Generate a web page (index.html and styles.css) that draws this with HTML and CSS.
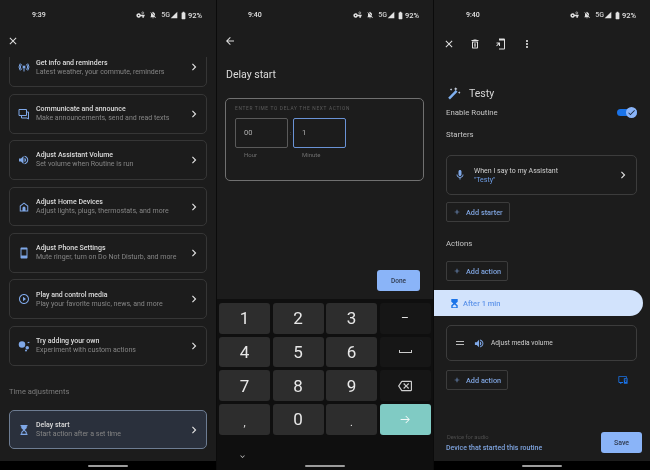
FILE: index.html
```html
<!DOCTYPE html>
<html lang="en">
<head>
<meta charset="utf-8">
<title>Routine</title>
<link rel="stylesheet" href="styles.css">
</head>
<body>
<svg class="defs" width="0" height="0" aria-hidden="true">
  <symbol id="i-close" viewBox="0 0 24 24"><path d="M19 6.41L17.59 5 12 10.59 6.41 5 5 6.41 10.59 12 5 17.59 6.41 19 12 13.41 17.59 19 19 17.59 13.41 12z"/></symbol>
  <symbol id="i-chev" viewBox="0 0 24 24"><path d="M10 6L8.59 7.41 13.17 12l-4.58 4.59L10 18l6-6z"/></symbol>
  <symbol id="i-back" viewBox="0 0 24 24"><path d="M20 11H7.83l5.59-5.59L12 4l-8 8 8 8 1.41-1.41L7.83 13H20v-2z"/></symbol>
  <symbol id="i-key" viewBox="0 0 24 24"><path d="M12.65 10C11.83 7.67 9.61 6 7 6c-3.31 0-6 2.69-6 6s2.69 6 6 6c2.61 0 4.83-1.67 5.65-4H17v4h4v-4h2v-4H12.65zM7 14c-1.1 0-2-.9-2-2s.9-2 2-2 2 .9 2 2-.9 2-2 2z"/><circle cx="18" cy="5" r="2.6" fill="none" stroke="currentColor" stroke-width="1.6"/></symbol>
  <symbol id="i-bell" viewBox="0 0 24 24"><path d="M20 18.69L7.84 6.14 5.27 3.49 4 4.76l2.8 2.8v.01c-.52.99-.8 2.16-.8 3.42v5l-2 2v1h13.73l2 2L21 19.72l-1-1.03zM12 22c1.11 0 2-.89 2-2h-4c0 1.11.89 2 2 2zm6-7.32V11c0-3.08-1.64-5.64-4.5-6.32V4c0-.83-.67-1.5-1.5-1.5s-1.5.67-1.5 1.5v.68c-.15.03-.29.08-.42.12-.1.03-.2.07-.3.11h-.01c-.2.08-.4.17-.59.27-.01.01-.02.01-.03.02L18 14.68z"/></symbol>
  <symbol id="i-signal" viewBox="0 0 24 24"><path d="M22 2v20H2z"/></symbol>
  <symbol id="i-batt" viewBox="0 0 24 24"><path d="M15.67 4H14V2h-4v2H8.33C7.6 4 7 4.6 7 5.33v15.33C7 21.4 7.6 22 8.33 22h7.33c.74 0 1.34-.6 1.34-1.33V5.33C17 4.6 16.4 4 15.67 4z"/></symbol>
  <symbol id="i-broadcast" viewBox="0 0 24 24"><circle cx="12" cy="12" r="3"/><path d="M12 15v6M8 8.5L6.5 7a8 8 0 0 0 0 10L8 15.5M16 8.5L17.500 7a8 8 0 0 1 0 10L16 15.5M4.500 5a12 12 0 0 0 0 14M19.500 5a12 12 0 0 1 0 14" fill="none" stroke="currentColor" stroke-width="2"/></symbol>
  <symbol id="i-chat" viewBox="0 0 24 24"><path d="M2 3h15v12H2zM7 15v5h11l3 2V8h-4" fill="none" stroke="currentColor" stroke-width="2"/></symbol>
  <symbol id="i-vol" viewBox="0 0 24 24"><path d="M2 9v6h4l5 5V4L6 9H2zm11-1.500c2 .8 3 2.500 3 4.500s-1 3.700-3 4.500zM13 3.500c4.500 1 7.500 4.300 7.500 8.500s-3 7.500-7.500 8.500v-2c3.200-.9 5.500-3.500 5.500-6.500s-2.300-5.600-5.500-6.500z"/></symbol>
  <symbol id="i-home" viewBox="0 0 24 24"><path d="M12 3L3.500 9.500V21h17V9.500zM5.500 19v-8.500L12 5.500l6.500 5V19H15v-5a3 3 0 0 0-6 0v5z"/></symbol>
  <symbol id="i-phone" viewBox="0 0 24 24"><path d="M17 1H7c-1.100 0-2 .9-2 2v18c0 1.100.9 2 2 2h10c1.100 0 2-.9 2-2V3c0-1.100-.9-2-2-2zm0 16H7V5h10z"/></symbol>
  <symbol id="i-play" viewBox="0 0 24 24"><path d="M10 16.500l6-4.500-6-4.500v9zM12 2C6.480 2 2 6.480 2 12s4.480 10 10 10 10-4.480 10-10S17.520 2 12 2zm0 18c-4.410 0-8-3.590-8-8s3.590-8 8-8 8 3.590 8 8-3.590 8-8 8z"/></symbol>
  <symbol id="i-assist" viewBox="0 0 24 24"><circle cx="8" cy="9" r="6.500"/><circle cx="18.500" cy="15.500" r="3.500"/><circle cx="16" cy="21" r="2"/><path d="M19 4.500l3.500-1 .5 2-3.500 1z"/></symbol>
  <symbol id="i-hour" viewBox="0 0 24 24"><path d="M5 2h14v2.500h-1.500V8L13.500 12l4 4v3.500H19V22H5v-2.500h1.500V16l4-4-4-4V4.500H5zM8.500 17v2.500h7V17L12 13.500z"/></symbol>
  <symbol id="i-hourfull" viewBox="0 0 24 24"><path d="M5 2h14v6l-4.500 4 4.500 4v6H5v-6l4.500-4L5 8zM8 17.500V20h8v-2.500L12 14z"/></symbol>
  <symbol id="i-trash" viewBox="0 0 24 24"><path d="M6 19c0 1.100.9 2 2 2h8c1.100 0 2-.9 2-2V7H6v12zM8 9h8v10H8V9zm7.500-5l-1-1h-5l-1 1H5v2h14V4zM10 10.500h1.300v7H10zM12.700 10.500H14v7h-1.300z"/></symbol>
  <symbol id="i-export" viewBox="0 0 24 24"><path d="M8 1h10a2 2 0 0 1 2 2v18a2 2 0 0 1-2 2H8v-2h10V5H8zM3 9h7v7H8V12.400L3.700 16.700 2.300 15.300 6.600 11H3z"/></symbol>
  <symbol id="i-more" viewBox="0 0 24 24"><path d="M12 8c1.100 0 2-.9 2-2s-.9-2-2-2-2 .9-2 2 .9 2 2 2zm0 2c-1.100 0-2 .9-2 2s.9 2 2 2 2-.9 2-2-.9-2-2-2zm0 6c-1.100 0-2 .9-2 2s.9 2 2 2 2-.9 2-2-.9-2-2-2z"/></symbol>
  <symbol id="i-wand" viewBox="0 0 24 24"><path d="M2 20l13-13 3 3L5 23z"/><path d="M15 2l1 2 2 1-2 1-1 2-1-2-2-1 2-1zM21 9l.8 1.500 1.500.8-1.500.8-.8 1.500-.8-1.500-1.500-.8 1.500-.8zM7 4l.7 1.300L9 6l-1.300.7L7 8l-.7-1.300L5 6l1.300-.7z" fill="#cfd8e6"/></symbol>
  <symbol id="i-mic" viewBox="0 0 24 24"><path d="M12 14c1.660 0 3-1.340 3-3V5c0-1.660-1.340-3-3-3S9 3.340 9 5v6c0 1.660 1.340 3 3 3zm5.300-3c0 3-2.540 5.100-5.300 5.100S6.700 14 6.700 11H5c0 3.410 2.720 6.230 6 6.720V21h2v-3.280c3.280-.48 6-3.300 6-6.720h-1.700z"/></symbol>
  <symbol id="i-plus" viewBox="0 0 24 24"><path d="M19 13h-6v6h-2v-6H5v-2h6V5h2v6h6v2z"/></symbol>
  <symbol id="i-check" viewBox="0 0 24 24"><path d="M9 16.170L4.830 12l-1.420 1.410L9 19 21 7l-1.410-1.410z"/></symbol>
  <symbol id="i-cast" viewBox="0 0 24 24"><path d="M1 3h20v4h-2V5H3v12h9v2H8v2H5v-2H3a2 2 0 0 1-2-2zM14 8h9v13h-9zM16 10v3h5v-3zM17 15.500a1.500 1.500 0 1 0 3 0 1.500 1.500 0 1 0-3 0"/></symbol>
  <symbol id="i-bksp" viewBox="0 0 24 24"><path d="M22 3H7c-.69 0-1.230.35-1.590.88L0 12l5.410 8.110c.36.530.9.890 1.590.890h15c1.100 0 2-.9 2-2V5c0-1.100-.9-2-2-2zm0 16H7.070L2.400 12l4.660-7H22v14zm-11.590-2L14 13.410 17.590 17 19 15.590 15.410 12 19 8.410 17.590 7 14 10.590 10.410 7 9 8.410 12.590 12 9 15.590z"/></symbol>
  <symbol id="i-next" viewBox="0 0 24 24"><path d="M13 5l7 7-7 7-1.200-1.200 5-5H3v-1.600h13.800l-5-5z"/></symbol>
  <symbol id="i-down" viewBox="0 0 24 24"><path d="M7.410 8.590L12 13.170l4.590-4.580L18 10l-6 6-6-6z"/></symbol>
</svg>

<main class="page">

  <section class="screen">
    <div class="status status-a">
      <span class="clock">9:39</span>
      <span class="status-icons">
        <svg class="s-key"><use href="#i-key"/></svg>
        <svg class="s-bell"><use href="#i-bell"/></svg>
        <span class="net">5G</span>
        <svg class="s-sig"><use href="#i-signal"/></svg>
        <svg class="s-bat"><use href="#i-batt"/></svg>
        <span class="pct">92%</span>
      </span>
    </div>
    <div class="bar bar-a"><svg class="ic-bar"><use href="#i-close"/></svg></div>
    <div class="scroll">
      <div class="card-list">
        <div class="card"><svg class="ic-card"><use href="#i-broadcast"/></svg><div class="card-text"><div class="card-title">Get info and reminders</div><div class="card-sub">Latest weather, your commute, reminders</div></div><svg class="ic-chev"><use href="#i-chev"/></svg></div>
        <div class="card"><svg class="ic-card"><use href="#i-chat"/></svg><div class="card-text"><div class="card-title">Communicate and announce</div><div class="card-sub">Make announcements, send and read texts</div></div><svg class="ic-chev"><use href="#i-chev"/></svg></div>
        <div class="card"><svg class="ic-card"><use href="#i-vol"/></svg><div class="card-text"><div class="card-title">Adjust Assistant Volume</div><div class="card-sub">Set volume when Routine is run</div></div><svg class="ic-chev"><use href="#i-chev"/></svg></div>
        <div class="card"><svg class="ic-card"><use href="#i-home"/></svg><div class="card-text"><div class="card-title">Adjust Home Devices</div><div class="card-sub">Adjust lights, plugs, thermostats, and more</div></div><svg class="ic-chev"><use href="#i-chev"/></svg></div>
        <div class="card"><svg class="ic-card"><use href="#i-phone"/></svg><div class="card-text"><div class="card-title">Adjust Phone Settings</div><div class="card-sub">Mute ringer, turn on Do Not Disturb, and more</div></div><svg class="ic-chev"><use href="#i-chev"/></svg></div>
        <div class="card"><svg class="ic-card"><use href="#i-play"/></svg><div class="card-text"><div class="card-title">Play and control media</div><div class="card-sub">Play your favorite music, news, and more</div></div><svg class="ic-chev"><use href="#i-chev"/></svg></div>
        <div class="card"><svg class="ic-card"><use href="#i-assist"/></svg><div class="card-text"><div class="card-title">Try adding your own</div><div class="card-sub">Experiment with custom actions</div></div><svg class="ic-chev"><use href="#i-chev"/></svg></div>
      </div>
      <div class="section-label">Time adjustments</div>
      <div class="card card-active"><svg class="ic-card"><use href="#i-hour"/></svg><div class="card-text"><div class="card-title">Delay start</div><div class="card-sub">Start action after a set time</div></div><svg class="ic-chev"><use href="#i-chev"/></svg></div>
    </div>
    <div class="nav"><span class="pill"></span></div>
  </section>

  <section class="screen">
    <div class="status">
      <span class="clock">9:40</span>
      <span class="status-icons">
        <svg class="s-key"><use href="#i-key"/></svg>
        <svg class="s-bell"><use href="#i-bell"/></svg>
        <span class="net">5G</span>
        <svg class="s-sig"><use href="#i-signal"/></svg>
        <svg class="s-bat"><use href="#i-batt"/></svg>
        <span class="pct">92%</span>
      </span>
    </div>
    <div class="bar bar-a"><svg class="ic-bar"><use href="#i-back"/></svg></div>
    <h1 class="delay-title">Delay start</h1>
    <div class="delay-card">
      <div class="delay-label">ENTER TIME TO DELAY THE NEXT ACTION</div>
      <div class="delay-fields">
        <div class="field"><div class="field-box">00</div><div class="field-cap">Hour</div></div>
        <span class="colon">:</span>
        <div class="field"><div class="field-box field-focus">1</div><div class="field-cap">Minute</div></div>
      </div>
    </div>
    <div class="done-row"><button class="btn-blue btn-done">Done</button></div>
    <div class="keyboard">
      <div class="keys">
        <div class="key">1</div><div class="key">2</div><div class="key">3</div><div class="key key-dark key-sym">–</div>
        <div class="key">4</div><div class="key">5</div><div class="key">6</div><div class="key key-dark"><span class="space-mark"></span></div>
        <div class="key">7</div><div class="key">8</div><div class="key">9</div><div class="key key-dark"><svg class="ic-bksp"><use href="#i-bksp"/></svg></div>
        <div class="key key-punct">,</div><div class="key">0</div><div class="key key-punct">.</div><div class="key key-go"><svg class="ic-next"><use href="#i-next"/></svg></div>
      </div>
      <div class="kb-foot">
        <svg class="ic-down"><use href="#i-down"/></svg>
        <span class="pill pill-kb"></span>
      </div>
    </div>
  </section>

  <section class="screen">
    <div class="status status-c">
      <span class="clock">9:40</span>
      <span class="status-icons">
        <svg class="s-key"><use href="#i-key"/></svg>
        <svg class="s-bell"><use href="#i-bell"/></svg>
        <span class="net">5G</span>
        <svg class="s-sig"><use href="#i-signal"/></svg>
        <svg class="s-bat"><use href="#i-batt"/></svg>
        <span class="pct">92%</span>
      </span>
    </div>
    <div class="bar bar-c">
      <svg class="ic-tool"><use href="#i-close"/></svg>
      <svg class="ic-tool"><use href="#i-trash"/></svg>
      <svg class="ic-tool"><use href="#i-export"/></svg>
      <svg class="ic-tool"><use href="#i-more"/></svg>
    </div>
    <div class="routine">
      <div class="r-head"><svg class="ic-wand"><use href="#i-wand"/></svg><span class="r-name">Testy</span></div>
      <div class="r-enable"><span>Enable Routine</span><span class="toggle"><span class="knob"><svg class="ic-check"><use href="#i-check"/></svg></span></span></div>
      <div class="r-label r-starters">Starters</div>
      <div class="r-card r-starter">
        <svg class="ic-mic"><use href="#i-mic"/></svg>
        <div class="r-card-text"><div class="r-when">When I say to my Assistant</div><div class="r-quote">"Testy"</div></div>
        <svg class="ic-chev"><use href="#i-chev"/></svg>
      </div>
      <div class="add add-starter"><svg class="ic-plus"><use href="#i-plus"/></svg>Add starter</div>
      <div class="r-label r-actions">Actions</div>
      <div class="add add-action"><svg class="ic-plus"><use href="#i-plus"/></svg>Add action</div>
    </div>
    <div class="after"><svg class="ic-hour"><use href="#i-hourfull"/></svg>After 1 min</div>
    <div class="routine">
      <div class="r-card r-action">
        <span class="drag"></span>
        <svg class="ic-vol"><use href="#i-vol"/></svg>
        <span class="r-vol-text">Adjust media volume</span>
      </div>
      <div class="add-row">
        <div class="add add-action"><svg class="ic-plus"><use href="#i-plus"/></svg>Add action</div>
        <svg class="ic-cast"><use href="#i-cast"/></svg>
      </div>
    </div>
    <div class="foot">
      <div class="foot-text"><div class="foot-cap">Device for audio</div><div class="foot-link">Device that started this routine</div></div>
      <button class="btn-blue btn-save">Save</button>
    </div>
    <div class="nav"><span class="pill"></span></div>
  </section>

</main>
</body>
</html>
```
FILE: styles.css
```css
* { box-sizing: border-box; }
html, body { margin: 0; padding: 0; background: #0b0b0b; }
body { width: 650px; height: 470px; overflow: hidden; font-family: Roboto, "Liberation Sans", sans-serif; color: #dedede; }
.defs { display: none; }
svg { fill: currentColor; display: block; flex: none; }

.page { display: grid; grid-template-columns: 216px 216px 216px; column-gap: 1px; height: 470px; will-change: transform; }
.screen { background: #1c1c1c; height: 470px; display: flex; flex-direction: column; overflow: hidden; }

.status { height: 30px; flex: none; display: flex; align-items: center; justify-content: space-between; padding: 0 14px 0 31px; font-size: 7px; font-weight: 500; color: #e2e2e2; }
.status-a { padding-left: 32px; }
.status-c { padding-left: 32px; }
.status-icons { display: flex; align-items: center; }
.s-key { width: 9px; height: 9px; margin-right: 4px; }
.s-bell { width: 8px; height: 8px; margin-right: 4px; }
.net { color: #cfcfcf; }
.s-sig { width: 8px; height: 8px; margin-right: 1px; }
.s-bat { width: 9px; height: 9px; }
.pct { font-size: 7.5px; }

.bar { flex: none; display: flex; align-items: center; }
.bar-a { height: 22px; padding-left: 7px; }
.ic-bar { width: 12px; height: 12px; }
.bar-c { height: 28px; padding-left: 9px; gap: 14px; }
.ic-tool { width: 12px; height: 12px; color: #e0e0e0; }

.scroll { flex: 1; min-height: 0; margin-top: 5px; padding: 0 9px; overflow: hidden; }
.card-list { display: flex; flex-direction: column; gap: 6.6px; margin-top: -9.5px; }
.card { height: 39.8px; flex: none; border: 1px solid #363636; border-radius: 5px; display: flex; align-items: center; padding: 0 5px 0 8px; }
.card-active { background: #2a303c; border-color: #6d7c92; }
.ic-card { width: 12px; height: 12px; color: #7fa8e8; margin-right: 6px; }
.card-text { flex: 1; min-width: 0; white-space: nowrap; padding-top: 1px; }
.card-title { font-size: 7px; font-weight: 500; line-height: 9px; color: #dcdcdc; }
.card-sub { font-size: 7px; line-height: 9.5px; color: #858585; }
.ic-chev { width: 14px; height: 14px; color: #e0e0e0; }
.section-label { font-size: 7.5px; line-height: 10px; color: #7c7c7c; margin: 21px 0 13px; }

.nav { height: 9px; flex: none; background: #000; display: flex; justify-content: center; padding-top: 4px; }
.pill { display: block; width: 40px; height: 2px; border-radius: 1px; background: #9c9c9c; }

.delay-title { margin: 13px 0 0 9px; line-height: 20px; font-weight: 400; color: #dcdcdc; font-size: 10.5px; }
.delay-card { margin: 13px 9px 0 8px; height: 83px; border: 1px solid #707070; border-radius: 5px; padding: 6px 9px; flex: none; }
.delay-label { font-size: 4.8px; line-height: 8px; letter-spacing: 0.69px; color: #5c5c5c; }
.delay-fields { display: flex; margin-top: 5px; }
.field { width: 53px; }
.field-box { height: 30px; border: 1px solid #5a5a5a; border-radius: 2px; font-size: 7.5px; line-height: 28px; padding-left: 8px; color: #b0b0b0; }
.field-focus { border-color: #6a93d6; }
.field-cap { font-size: 6px; line-height: 8px; margin-top: 3px; padding-left: 9px; color: #6f6f6f; }
.colon { width: 5px; line-height: 30px; font-size: 6px; text-align: center; color: #777; }

.done-row { flex: 1; display: flex; justify-content: flex-end; align-items: flex-end; padding: 0 13px 8px 0; }
.btn-blue { border: 0; border-radius: 3px; background: #8ab4f8; color: #2f3a4e; font-family: inherit; font-weight: 500; padding: 0; }
.btn-done { width: 43px; height: 21px; font-size: 6.5px; }

.keyboard { height: 171px; flex: none; background: #0f0f0f; padding: 4px 3px 0 2px; display: flex; flex-direction: column; }
.keys { display: grid; grid-template-columns: repeat(4, 51px); column-gap: 2.5px; grid-auto-rows: 30.5px; row-gap: 3.2px; }
.key { background: #2d2d2d; border-radius: 3px; display: flex; align-items: center; justify-content: center; font-size: 17px; color: #e8e8e8; }
.key-dark { background: #161616; }
.key-sym { font-size: 12px; }
.key-punct { font-size: 11px; padding-top: 7px; }
.key-go { background: #80cbc4; color: #f2f8f7; }
.space-mark { width: 13px; height: 3px; border: 1px solid #ccc; border-top: 0; }
.ic-bksp { width: 14px; height: 14px; color: #cfcfcf; }
.ic-next { width: 13px; height: 13px; }
.kb-foot { flex: 1; display: flex; flex-direction: column; align-items: center; }
.ic-down { width: 9px; height: 9px; color: #bdbdbd; margin: 17px 0 0 18.5px; align-self: flex-start; }
.pill-kb { margin-top: 4px; }

.routine { padding: 0 13px 0 12px; flex: none; display: flex; flex-direction: column; }
.r-head { display: flex; align-items: center; margin: 25px 0 0 1px; height: 20px; }
.ic-wand { width: 14px; height: 14px; color: #7fb0f0; margin-right: 8px; }
.r-name { font-size: 10.5px; color: #d6d6d6; }
.r-enable { display: flex; align-items: center; justify-content: space-between; font-size: 7.8px; color: #c4c4c4; height: 16px; margin-top: 1px; }
.toggle { width: 20px; height: 7px; border-radius: 4px; background: #1a73e8; display: flex; align-items: center; justify-content: flex-end; }
.knob { flex: none; width: 11px; height: 11px; border-radius: 50%; background: #8ab4f8; color: #1c2a40; display: flex; align-items: center; justify-content: center; }
.ic-check { width: 9px; height: 9px; }
.r-label { font-size: 7.8px; line-height: 10px; color: #c4c4c4; }
.r-starters { margin-top: 10px; }
.r-card { border: 1px solid #3c3c3c; border-radius: 5px; display: flex; align-items: center; }
.r-starter { height: 40px; margin-top: 15px; padding: 0 6px 0 7px; }
.ic-mic { width: 12px; height: 12px; color: #7fa8e8; margin-right: 8px; }
.r-card-text { flex: 1; padding-top: 1px; }
.r-when { font-size: 7px; line-height: 9px; color: #cfcfcf; }
.r-quote { font-size: 7px; line-height: 8px; color: #6f9ee6; }
.add { display: flex; align-items: center; height: 20px; border: 1px solid #3c3c3c; border-radius: 2px; font-size: 7.3px; font-weight: 500; color: #7ea3de; }
.add-starter { width: 64px; margin-top: 7px; padding-left: 6px; }
.add-action { width: 62px; padding-left: 6px; }
.ic-plus { width: 8px; height: 8px; margin-right: 5px; }
.r-actions { margin-top: 17px; }
.routine > .add-action { margin-top: 12px; }
.after { flex: none; margin-top: 9px; width: 209px; height: 26px; background: #d2e3fc; border-radius: 0 13px 13px 0; display: flex; align-items: center; padding-left: 15px; font-size: 7.5px; font-weight: 500; color: #5f95ea; }
.ic-hour { width: 11px; height: 11px; color: #1a73e8; margin-right: 3px; }
.r-action { height: 36px; margin-top: 9px; padding-left: 9px; }
.drag { width: 8px; height: 4px; border-top: 1.5px solid #bbb; border-bottom: 1.5px solid #bbb; margin-right: 10px; }
.ic-vol { width: 11px; height: 11px; color: #7fa8e8; margin-right: 6px; }
.r-vol-text { font-size: 6.6px; color: #cfcfcf; }
.add-row { display: flex; align-items: center; justify-content: space-between; margin-top: 9px; padding-right: 9px; }
.ic-cast { width: 10px; height: 10px; color: #1a73e8; }
.foot { flex: 1; display: flex; justify-content: space-between; align-items: flex-end; padding: 0 8px 8px 13px; }
.foot-cap { font-size: 5.8px; line-height: 8px; color: #4f4f4f; }
.foot-link { font-size: 7px; font-weight: 500; line-height: 9px; margin-top: 3px; color: #7ea3de; margin-left: -1px; }
.btn-save { width: 41px; height: 21px; font-size: 7px; }
```
